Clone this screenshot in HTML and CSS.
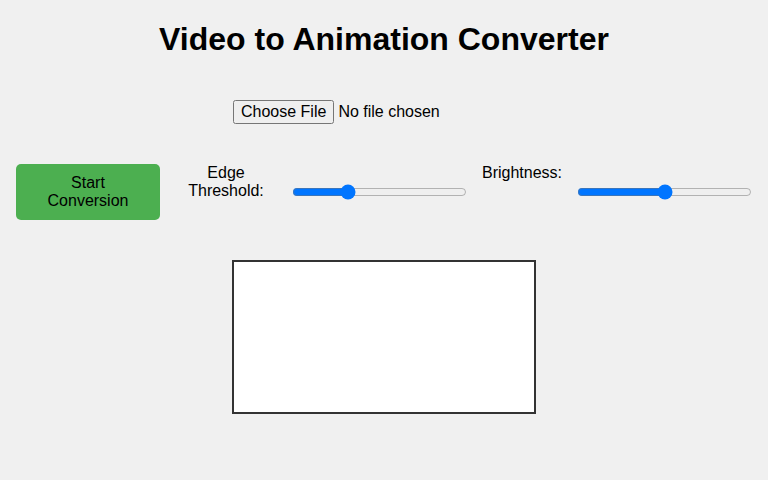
FILE: index.html
```html
<!DOCTYPE html>
<html lang="en">
<head>
<meta charset="utf-8">
<title>Video to Animation Converter</title>
<link rel="stylesheet" href="styles.css">
</head>
<body>
<div class="app">
  <h1 class="title">Video to Animation Converter</h1>
  <input class="file-input" type="file" accept="video/*">
  <div class="controls">
    <button class="start-btn" type="button">Start Conversion</button>
    <label class="ctl-label edge-label" for="edge">Edge Threshold:</label>
    <input class="slider edge-slider" id="edge" type="range" min="0" max="100" value="30">
    <label class="ctl-label bright-label" for="bright">Brightness:</label>
    <input class="slider bright-slider" id="bright" type="range" min="0" max="100" value="50">
  </div>
  <canvas class="output" width="300" height="150"></canvas>
</div>
</body>
</html>
```
FILE: styles.css
```css
html, body {
  margin: 0;
  padding: 0;
  background: #f0f0f0;
}
body {
  font-family: "Liberation Sans", Arial, sans-serif;
  font-size: 16px;
  color: #000;
}
.app {
  display: flex;
  flex-direction: column;
  align-items: center;
}
.title {
  margin: 21px 0 0;
  font-size: 32px;
  line-height: 37px;
  font-weight: bold;
}
.file-input {
  margin-top: 42px;
  font-family: "Liberation Sans", Arial, sans-serif;
  font-size: 16px;
  width: 302px;
}
.controls {
  margin-top: 40px;
  align-self: stretch;
  padding: 0 16px;
  display: flex;
  align-items: center;
}
.start-btn {
  flex: none;
  width: 144px;
  height: 56px;
  padding: 10px 20px;
  border: none;
  border-radius: 5px;
  background: #4caf50;
  color: #000;
  font-family: "Liberation Sans", Arial, sans-serif;
  font-size: 16px;
  line-height: 18px;
}
.ctl-label {
  flex: none;
  align-self: flex-start;
  text-align: center;
  line-height: 18px;
}
.edge-label {
  margin-left: 28px;
  width: 76px;
}
.bright-label {
  margin-left: 15px;
  width: 80px;
  white-space: nowrap;
}
.slider {
  flex: none;
  width: 175px;
  margin: 0;
}
.edge-slider {
  margin-left: 28px;
}
.bright-slider {
  margin-left: 15px;
}
.output {
  margin-top: 40px;
  width: 300px;
  height: 150px;
  border: 2px solid #333;
  background: #fff;
}
```
